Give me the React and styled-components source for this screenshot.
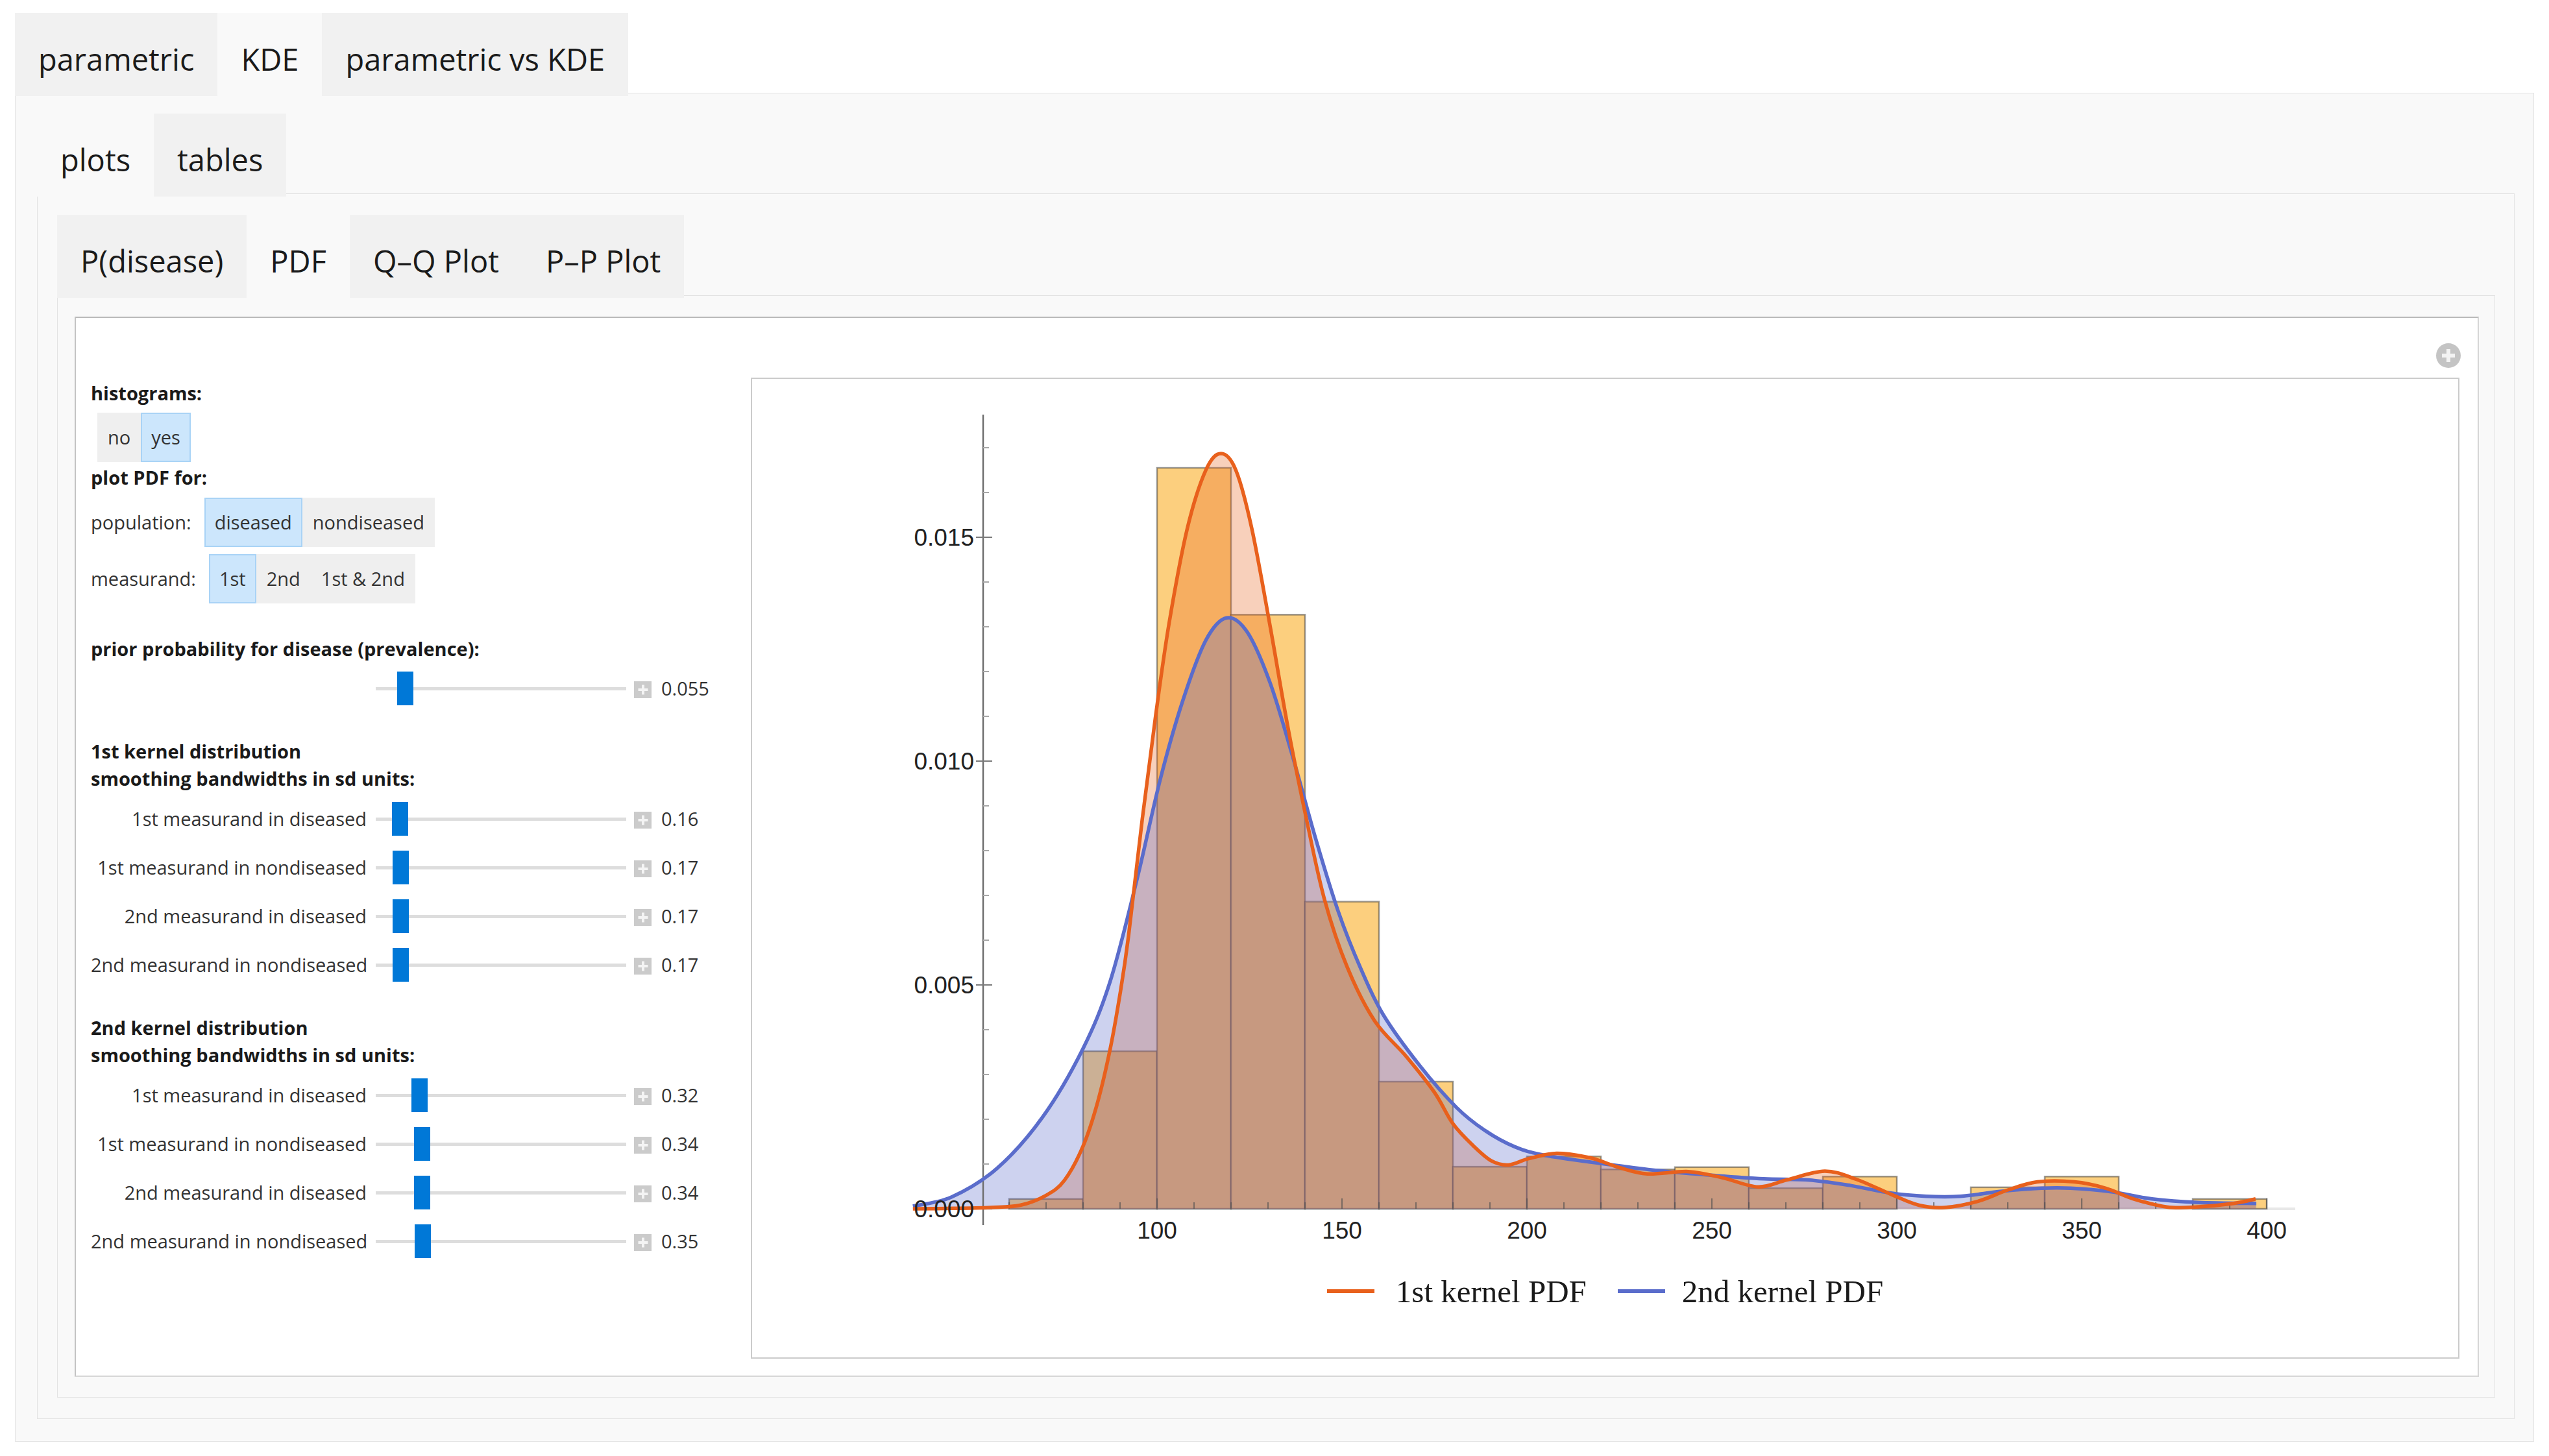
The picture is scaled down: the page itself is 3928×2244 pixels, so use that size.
import React from 'react';
import styled, { createGlobalStyle } from 'styled-components';

const GlobalStyle = createGlobalStyle`
  html, body {
    margin: 0;
    padding: 0;
    background: #ffffff;
  }
  body {
    width: 3928px;
    height: 2244px;
    overflow: hidden;
    font-family: "Open Sans", "Noto Sans", sans-serif;
    color: #222;
  }
`;

const Page = styled.div`
  box-sizing: border-box;
  width: 3928px;
  height: 2244px;
  padding: 20px 23px 0;
`;

const TabBar = styled.div`
  display: flex;
  height: 128px;
  margin-bottom: -${p => p.$overlap}px;
  position: relative;
  z-index: 1;
`;

const Tab = styled.div`
  box-sizing: border-box;
  height: 100%;
  padding: 48px 36px 0;
  font-size: 47px;
  line-height: 47px;
  color: #1a1a1a;
  white-space: nowrap;
  background: ${p => (p.$active ? '#f9f9f9' : '#f1f1f1')};
`;

const Panel = styled.div`
  box-sizing: border-box;
  background: #f9f9f9;
  border: 1px solid #e3e3e3;
  padding: ${p => p.$pad};
`;

const ContentBox = styled.div`
  box-sizing: border-box;
  position: relative;
  display: flex;
  height: 1634px;
  background: #ffffff;
  border: 2px solid #d6d6d6;
  border-top-color: #bababa;
  border-left-color: #c4c4c4;
`;

const ExpandButton = styled.div`
  position: absolute;
  top: 39px;
  right: 26px;
  width: 38px;
  height: 38px;
  border-radius: 50%;
  background: #c4c4c4;

  &::before,
  &::after {
    content: '';
    position: absolute;
    background: #f3f3f3;
    left: 50%;
    top: 50%;
    transform: translate(-50%, -50%);
  }
  &::before {
    width: 20px;
    height: 6px;
  }
  &::after {
    width: 6px;
    height: 20px;
  }
`;

/* ---------- controls ---------- */

const Controls = styled.div`
  box-sizing: border-box;
  flex: none;
  width: 1040px;
  padding: 96px 0 0 23px;
  font-size: 29px;
  color: #333;
`;

const Heading = styled.div`
  font-weight: 700;
  font-size: 29px;
  line-height: ${p => p.$lh || 40}px;
  color: #1a1a1a;
  margin-top: ${p => p.$mt || 0}px;
  white-space: nowrap;
`;

const OptionRow = styled.div`
  display: flex;
  align-items: center;
  height: 76px;
  margin-top: ${p => p.$mt || 0}px;
`;

const OptionLabel = styled.span`
  line-height: 40px;
  margin-right: 20px;
  color: #333;
`;

const SegmentGroup = styled.div`
  display: inline-flex;
  height: 76px;
  background: #efefef;
  margin-top: ${p => p.$mt || 0}px;
  margin-left: ${p => p.$ml || 0}px;
`;

const Segment = styled.div`
  box-sizing: border-box;
  display: flex;
  align-items: center;
  padding: 0 14px;
  height: 100%;
  line-height: 40px;
  color: #333;
  border: 2px solid ${p => (p.$active ? '#a9d3f6' : 'transparent')};
  background: ${p => (p.$active ? '#cce6fc' : 'transparent')};
`;

const SliderRow = styled.div`
  display: flex;
  align-items: center;
  height: 56px;
  margin-top: ${p => p.$mt || 0}px;
`;

const SliderLabel = styled.div`
  flex: none;
  width: 425px;
  margin-right: 14px;
  text-align: right;
  white-space: nowrap;
  line-height: 40px;
  color: #333;
`;

const Track = styled.div`
  position: relative;
  flex: none;
  width: 386px;
  height: 56px;

  &::before {
    content: '';
    position: absolute;
    left: 0;
    right: 0;
    top: 26px;
    height: 5px;
    background: #dddddd;
  }
`;

const Thumb = styled.div`
  position: absolute;
  top: 2px;
  width: 25px;
  height: 52px;
  background: #0078d7;
`;

const StepButton = styled.div`
  position: relative;
  flex: none;
  width: 27px;
  height: 26px;
  margin: 4px 15px 0 12px;
  background: #cbcbcb;

  &::before,
  &::after {
    content: '';
    position: absolute;
    left: 50%;
    top: 50%;
    transform: translate(-50%, -50%);
    background: #f4f4f4;
  }
  &::before {
    width: 15px;
    height: 4px;
  }
  &::after {
    width: 4px;
    height: 15px;
  }
`;

const SliderValue = styled.span`
  line-height: 40px;
  color: #333;
`;

const TRACK_FREE = 386 - 25;

function Slider({ label, value, min, max, mt }) {
  const left = ((parseFloat(value) - min) / (max - min)) * TRACK_FREE;
  return (
    <SliderRow $mt={mt}>
      <SliderLabel>{label}</SliderLabel>
      <Track>
        <Thumb style={{ left: `${left}px` }} />
      </Track>
      <StepButton />
      <SliderValue>{value}</SliderValue>
    </SliderRow>
  );
}

const kernel1 = [
  ['1st measurand in diseased', '0.16'],
  ['1st measurand in nondiseased', '0.17'],
  ['2nd measurand in diseased', '0.17'],
  ['2nd measurand in nondiseased', '0.17'],
];

const kernel2 = [
  ['1st measurand in diseased', '0.32'],
  ['1st measurand in nondiseased', '0.34'],
  ['2nd measurand in diseased', '0.34'],
  ['2nd measurand in nondiseased', '0.35'],
];

function ControlPanel() {
  return (
    <Controls>
      <Heading>histograms:</Heading>
      <SegmentGroup $mt={10} $ml={10}>
        <Segment>no</Segment>
        <Segment $active>yes</Segment>
      </SegmentGroup>
      <Heading $mt={4}>plot PDF for:</Heading>
      <OptionRow $mt={11}>
        <OptionLabel>population:</OptionLabel>
        <SegmentGroup>
          <Segment $active>diseased</Segment>
          <Segment>nondiseased</Segment>
        </SegmentGroup>
      </OptionRow>
      <OptionRow $mt={11}>
        <OptionLabel>measurand:</OptionLabel>
        <SegmentGroup>
          <Segment $active>1st</Segment>
          <Segment>2nd</Segment>
          <Segment>1st &amp; 2nd</Segment>
        </SegmentGroup>
      </OptionRow>

      <Heading $mt={50}>prior probability for disease (prevalence):</Heading>
      <Slider label="" value="0.055" min={0.001} max={0.6} mt={13} />

      <Heading $mt={48} $lh={42}>
        1st kernel distribution
        <br />
        smoothing bandwidths in sd units:
      </Heading>
      {kernel1.map(([label, value], i) => (
        <Slider key={label} label={label} value={value} min={0.03} max={1.94} mt={i === 0 ? 13 : 19} />
      ))}

      <Heading $mt={48} $lh={42}>
        2nd kernel distribution
        <br />
        smoothing bandwidths in sd units:
      </Heading>
      {kernel2.map(([label, value], i) => (
        <Slider key={label} label={label} value={value} min={0.03} max={1.94} mt={i === 0 ? 13 : 19} />
      ))}
    </Controls>
  );
}

/* ---------- chart ---------- */

const ChartFrame = styled.div`
  box-sizing: border-box;
  flex: 1;
  display: flex;
  flex-direction: column;
  height: 1512px;
  margin: 92px 28px 0 0;
  border: 2px solid #cbcbcb;
`;

const ChartSvg = styled.svg`
  display: block;
  flex: none;
`;

const TickLabel = styled.text`
  font-family: "Liberation Sans", Arial, sans-serif;
  font-size: 37px;
  fill: #222;
`;

const Legend = styled.div`
  display: flex;
  justify-content: center;
  align-items: center;
  gap: 48px;
  height: 80px;
  font-family: "Liberation Serif", "Times New Roman", serif;
  font-size: 49px;
  color: #1a1a1a;
`;

const LegendItem = styled.div`
  display: flex;
  align-items: center;
`;

const Swatch = styled.span`
  display: inline-block;
  width: 73px;
  height: 6px;
  margin-right: ${p => p.$gap}px;
  background: ${p => p.$color};
`;

const ORANGE = '#e8601c';
const BLUE = '#5a6ccb';

const X = v => 624 + (v - 100) * 5.7;
const Y = d => 1279 - d * 69000;
const f = p => `${p[0].toFixed(1)},${p[1].toFixed(1)}`;

const bars = [
  [60, 0.00022],
  [80, 0.00352],
  [100, 0.01655],
  [120, 0.01327],
  [140, 0.00686],
  [160, 0.00284],
  [180, 0.00094],
  [200, 0.00117],
  [220, 0.00088],
  [240, 0.00093],
  [260, 0.00046],
  [280, 0.00072],
  [320, 0.00048],
  [340, 0.00072],
  [380, 0.00022],
];

const kde1 = [
  [34, 0], [45, 0.00001], [55, 0.00003], [63, 0.00008], [70, 0.0003], [75, 0.00064],
  [80, 0.0014], [84, 0.0024], [87.4, 0.0036], [90, 0.0048], [92.3, 0.0061], [96, 0.0087],
  [99.6, 0.011], [103.3, 0.0131], [108.2, 0.0152], [113.2, 0.0165], [117.3, 0.01687],
  [121.3, 0.0165], [125.6, 0.0152], [130.6, 0.013], [135.5, 0.0107], [140.4, 0.0087],
  [145.3, 0.0069], [151.4, 0.0054], [158.8, 0.0042], [167.4, 0.0034], [175, 0.0026],
  [180, 0.0019], [185.6, 0.0014], [190.4, 0.00107], [195, 0.00098], [200.5, 0.00112],
  [208, 0.00124], [217, 0.00114], [225, 0.00092], [232.6, 0.00078], [243.7, 0.00083],
  [253, 0.00069], [262.5, 0.00049], [270.4, 0.00065], [280.5, 0.00084], [289, 0.00066],
  [298.5, 0.00032], [306, 0.00008], [313, 0.00003], [322, 0.00017], [330, 0.00042],
  [338, 0.0006], [348, 0.0006], [356.5, 0.00046], [364, 0.00022], [373, 0.00004],
  [381, 0.00004], [391, 0.00012], [397, 0.00022],
];

const kde2 = [
  [34, 0.00006], [44.4, 0.00026], [56.7, 0.0009], [69, 0.00204], [80, 0.00358],
  [87.4, 0.0051], [94.7, 0.0074], [100.9, 0.0096], [107, 0.01136], [113.2, 0.0127],
  [118.8, 0.0132], [124.4, 0.01288], [130.6, 0.01174], [136.7, 0.01009], [142.8, 0.00829],
  [149, 0.00664], [155.1, 0.00536], [161.2, 0.00433], [171.1, 0.00319], [181, 0.00226],
  [188.8, 0.00174], [196.6, 0.00139], [204.6, 0.0012], [220.2, 0.00101], [235.8, 0.00085],
  [251.4, 0.00074], [264, 0.00067], [276.5, 0.00064], [287.5, 0.00052], [298.4, 0.00035],
  [307.9, 0.00028], [317.2, 0.00028], [328.3, 0.00039], [339.1, 0.00046], [347, 0.00046],
  [358, 0.00038], [369, 0.00022], [381.6, 0.00014], [397.2, 0.00012],
];

function curvePath(data) {
  const pts = data.map(([v, d]) => [X(v), Y(d)]);
  let s = `M${f(pts[0])}`;
  for (let i = 0; i < pts.length - 1; i++) {
    const p0 = pts[i - 1] || pts[i];
    const p1 = pts[i];
    const p2 = pts[i + 1];
    const p3 = pts[i + 2] || p2;
    const c1 = [p1[0] + (p2[0] - p0[0]) / 6, p1[1] + (p2[1] - p0[1]) / 6];
    const c2 = [p2[0] - (p3[0] - p1[0]) / 6, p2[1] - (p3[1] - p1[1]) / 6];
    s += ` C${f(c1)} ${f(c2)} ${f(p2)}`;
  }
  return s;
}

function fillPath(data) {
  const first = data[0][0];
  const last = data[data.length - 1][0];
  return `${curvePath(data)} L${X(last).toFixed(1)},${Y(0)} L${X(first).toFixed(1)},${Y(0)} Z`;
}

const AXIS_X = 356;
const yMajor = [0, 0.005, 0.01, 0.015];
const yMinor = Array.from({ length: 18 }, (_, i) => i * 0.001).filter(v => Math.round(v * 1000) % 5 !== 0);
const xTicks = Array.from({ length: 35 }, (_, i) => 60 + i * 10);

function PdfChart() {
  const line1 = curvePath(kde1);
  const line2 = curvePath(kde2);
  return (
    <ChartFrame>
      <ChartSvg width="2629" height="1366" viewBox="0 0 2629 1366">
        <line x1={AXIS_X} y1={Y(0)} x2={2378} y2={Y(0)} stroke="#e8e8e8" strokeWidth="4" />

        {bars.map(([x0, h]) => (
          <rect
            key={x0}
            x={X(x0)}
            y={Y(h)}
            width={114}
            height={h * 69000}
            fill="rgb(252,207,126)"
            stroke="rgba(70,70,70,0.55)"
            strokeWidth="2.5"
          />
        ))}

        <path d={fillPath(kde1)} fill="rgba(232,101,31,0.3)" />
        <path d={fillPath(kde2)} fill="rgba(90,107,201,0.3)" />

        {xTicks.map(v => (
          <line
            key={v}
            x1={X(v)}
            x2={X(v)}
            y1={Y(0)}
            y2={Y(0) - (v % 50 === 0 ? 16 : 10)}
            stroke="rgba(80,80,80,0.65)"
            strokeWidth="2"
          />
        ))}

        <line x1={AXIS_X} y1={55} x2={AXIS_X} y2={1304} stroke="#6f6f6f" strokeWidth="2.5" />
        {yMajor.map(v => (
          <line key={v} x1={AXIS_X - 11} x2={AXIS_X + 14} y1={Y(v)} y2={Y(v)} stroke="#7a7a7a" strokeWidth="2" />
        ))}
        {yMinor.map(v => (
          <line key={v} x1={AXIS_X} x2={AXIS_X + 9} y1={Y(v)} y2={Y(v)} stroke="#a8a8a8" strokeWidth="2" />
        ))}

        <path d={line2} fill="none" stroke={BLUE} strokeWidth="5.5" strokeLinejoin="round" />
        <path d={line1} fill="none" stroke={ORANGE} strokeWidth="5.5" strokeLinejoin="round" />

        {yMajor.map(v => (
          <TickLabel key={v} x={342} y={Y(v) + 13} textAnchor="end">
            {v.toFixed(3)}
          </TickLabel>
        ))}
        {[100, 150, 200, 250, 300, 350, 400].map(v => (
          <TickLabel key={v} x={X(v)} y={1325} textAnchor="middle">
            {v}
          </TickLabel>
        ))}
      </ChartSvg>
      <Legend>
        <LegendItem>
          <Swatch $color={ORANGE} $gap={33} />
          1st kernel PDF
        </LegendItem>
        <LegendItem>
          <Swatch $color={BLUE} $gap={26} />
          2nd kernel PDF
        </LegendItem>
      </Legend>
    </ChartFrame>
  );
}

export default function App() {
  return (
    <>
      <GlobalStyle />
      <Page>
        <TabBar $overlap={5}>
          <Tab>parametric</Tab>
          <Tab $active>KDE</Tab>
          <Tab>parametric vs KDE</Tab>
        </TabBar>
        <Panel $pad="31px 29px 34px 33px">
          <TabBar $overlap={5}>
            <Tab $active>plots</Tab>
            <Tab>tables</Tab>
          </TabBar>
          <Panel $pad="32px 29px 32px 30px">
            <TabBar $overlap={4}>
              <Tab>P(disease)</Tab>
              <Tab $active>PDF</Tab>
              <Tab>Q–Q Plot</Tab>
              <Tab>P–P Plot</Tab>
            </TabBar>
            <Panel $pad="32px 24px 31px 26px">
              <ContentBox>
                <ControlPanel />
                <PdfChart />
                <ExpandButton />
              </ContentBox>
            </Panel>
          </Panel>
        </Panel>
      </Page>
    </>
  );
}
